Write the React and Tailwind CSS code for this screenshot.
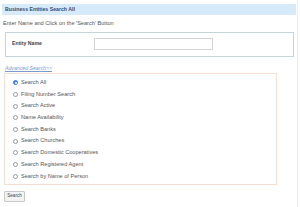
import React from 'react';

const options = [
    'Search All',
    'Filing Number Search',
    'Search Active',
    'Name Availability',
    'Search Banks',
    'Search Churches',
    'Search Domestic Cooperatives',
    'Search Registered Agent',
    'Search by Name of Person',
];

export default function App() {
    return (
        <div className="w-[300px] h-[207px] bg-white overflow-hidden flex" style={{ fontFamily: '"Liberation Sans", Arial, sans-serif' }}>
            <div className="w-[298px] flex flex-col pl-[2px] pt-[4px] border-r border-[#efeedb]">
                <div className="h-[11px] w-[294px] bg-[#d6eafa] flex items-center pl-[3px] text-[5.2px] font-bold text-[#34496e]">
                    Business Entities Search All
                </div>
                <div className="mt-[6px] text-[5.6px] text-[#555] pl-[1px] leading-none">
                    Enter Name and Click on the 'Search' Button
                </div>
                <div className="mt-[5px] ml-[3px] w-[289px] h-[25px] border border-[#c5d3dc] flex items-center">
                    <div className="w-[88px] pl-[6px] text-[5.2px] font-bold text-[#444]">Entity Name</div>
                    <div className="w-[119px] h-[12px] border border-[#d4d4d4] bg-white"></div>
                </div>
                <div className="mt-[9px] ml-[3px] text-[5.2px] italic text-[#7a9ccc] underline leading-none">
                    Advanced Search&gt;&gt;
                </div>
                <div className="mt-[2px] ml-[2px] w-[273px] h-[112px] border border-[#f5ddd2] flex flex-col pt-[5px] pl-[8px] gap-[3.7px]">
                    {options.map((o, i) => (
                        <div key={o} className="flex items-center gap-[3px] h-[8px]">
                            <span className={`w-[5px] h-[5px] rounded-full border ${i === 0 ? 'border-[#3b82f6] bg-[#3b82f6]' : 'border-[#9a9a9a] bg-white'} flex items-center justify-center`}>
                                {i === 0 && <span className="w-[2px] h-[2px] rounded-full bg-white"></span>}
                            </span>
                            <span className="text-[5.6px] text-[#555] leading-none">{o}</span>
                        </div>
                    ))}
                </div>
                <div className="mt-[6px] ml-[2px]">
                    <div className="w-[21px] h-[11px] border border-[#c8c8c8] bg-[#f3f3f3] rounded-[1px] flex items-center justify-center text-[4.6px] text-[#444]">
                        Search
                    </div>
                </div>
            </div>
        </div>
    );
}
